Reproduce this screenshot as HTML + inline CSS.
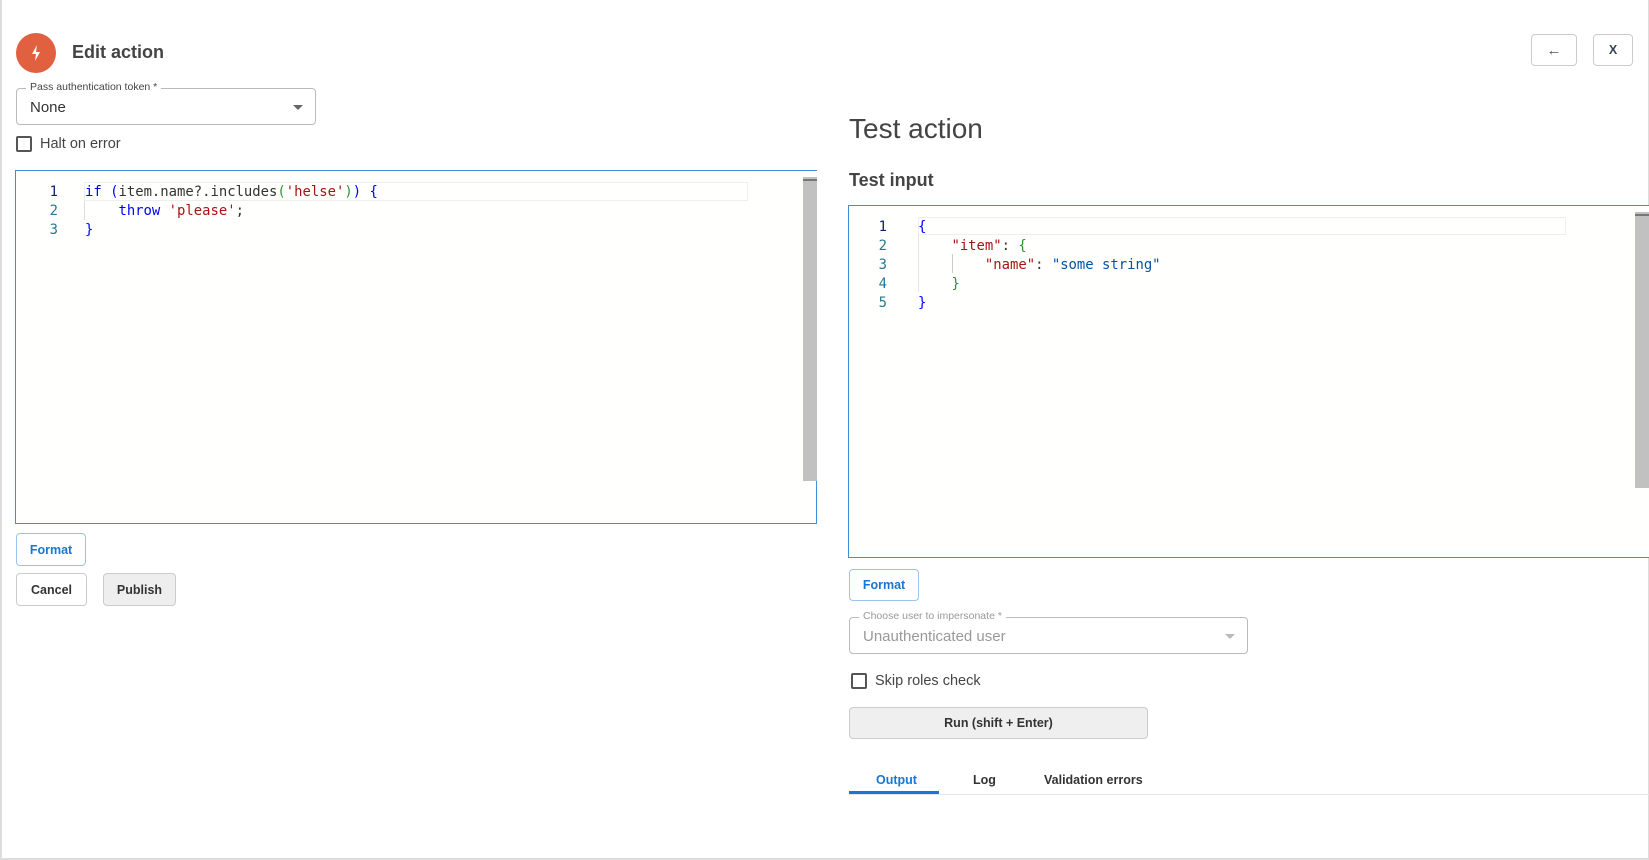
<!DOCTYPE html>
<html><head><meta charset="utf-8"><style>
*{box-sizing:border-box;margin:0;padding:0}
body{width:1649px;height:860px;background:#fff;font-family:"Liberation Sans",sans-serif;position:relative;overflow:hidden;color:#333}
.frame{position:absolute;left:0;top:0;width:1649px;height:860px;border-left:2px solid #ddd;border-bottom:2px solid #ddd;border-right:1px solid #ddd}
.a{position:absolute}
.btn{position:absolute;border:1px solid #ccc;border-radius:4px;background:#fff;font-size:12.5px;font-weight:bold;display:flex;align-items:center;justify-content:center;color:#333}
.sel{position:absolute;border:1px solid #bbb;border-radius:4px}
.lbl{position:absolute;top:-8px;left:9px;background:#fff;padding:0 4px;font-size:10.5px;color:#444}
.cb{position:absolute;width:16px;height:16px;border:2px solid #555;border-radius:2px}
.ed{position:absolute;border:1px solid #3b8fdc;background:#fffffd;font-family:"DejaVu Sans Mono",monospace;font-size:13.9px}
.ln{position:absolute;color:#237893;width:20px;text-align:right}
.code{position:absolute;white-space:pre}
.kw{color:#0000ff}.st{color:#a31515}.sv{color:#0451a5}.g{color:#319331}
</style></head><body>
<div class="frame"></div>
<div class="a" style="left:16px;top:33px;width:40px;height:40px;border-radius:50%;background:#e1603f"></div>
<svg class="a" style="left:30px;top:44px" width="12" height="18" viewBox="0 0 12 18"><path d="M7 1 L2 10 H6 L5 17 L10 8 H6 Z" fill="#fff"/></svg>
<div class="a" style="left:72px;top:42px;font-size:18px;font-weight:bold;color:#444">Edit action</div>
<div class="sel" style="left:16px;top:88px;width:300px;height:37px"><div class="lbl">Pass authentication token *</div>
<div class="a" style="left:13px;top:10px;font-size:15px;color:#333">None</div>
<div class="a" style="right:12px;top:16px;border-left:5px solid transparent;border-right:5px solid transparent;border-top:5px solid #666"></div></div>
<div class="cb" style="left:16px;top:136px"></div>
<div class="a" style="left:40px;top:136px;font-size:14.5px;color:#444">Halt on error</div>
<div class="ed" style="left:15px;top:170px;width:802px;height:354px">
<div class="a" style="left:68px;top:11px;width:664px;height:19px;border:1px solid #eee"></div>
<div class="a" style="left:68px;top:30px;width:1px;height:19px;background:#ddd"></div>
<div class="ln" style="left:22px;top:13px;color:#0b216f">1</div><div class="ln" style="left:22px;top:32px">2</div><div class="ln" style="left:22px;top:51px">3</div>
<div class="code" style="left:69px;top:13px"><span class="kw">if</span> <span class="kw">(</span>item.name?.includes<span class="g">(</span><span class="st">'helse'</span><span class="g">)</span><span class="kw">)</span> <span class="kw">{</span></div>
<div class="code" style="left:69px;top:32px">    <span class="kw">throw</span> <span class="st">'please'</span>;</div>
<div class="code" style="left:69px;top:51px"><span class="kw">}</span></div>
<div class="a" style="left:787px;top:0;width:14px;height:310px;background:#c1c1c1;border-top:6px solid #fff"></div>
<div class="a" style="left:787px;top:8px;width:14px;height:2px;background:#777"></div>
</div>
<div class="btn" style="left:16px;top:533px;width:70px;height:33px;color:#1976d2;border-color:#9cc3ec">Format</div>
<div class="btn" style="left:16px;top:573px;width:71px;height:33px">Cancel</div>
<div class="btn" style="left:103px;top:573px;width:73px;height:33px;background:#eee">Publish</div>

<div class="btn" style="left:1531px;top:34px;width:46px;height:32px;font-weight:normal;color:#555;font-size:15px">←</div>
<div class="btn" style="left:1593px;top:34px;width:40px;height:32px;color:#345">X</div>
<div class="a" style="left:849px;top:113px;font-size:28px;color:#444">Test action</div>
<div class="a" style="left:849px;top:170px;font-size:18px;font-weight:bold;color:#444">Test input</div>
<div class="ed" style="left:848px;top:205px;width:810px;height:353px">
<div class="a" style="left:69px;top:11px;width:648px;height:18px;border:1px solid #eee"></div>
<div class="a" style="left:69px;top:29px;width:1px;height:57px;background:#e5e5e5"></div>
<div class="a" style="left:103px;top:48px;width:1px;height:19px;background:#ccc"></div>
<div class="ln" style="left:18px;top:13px;color:#0b216f">1</div><div class="ln" style="left:18px;top:32px">2</div><div class="ln" style="left:18px;top:51px">3</div><div class="ln" style="left:18px;top:70px">4</div><div class="ln" style="left:18px;top:89px">5</div>
<div class="code" style="left:69px;top:13px"><span class="kw">{</span></div>
<div class="code" style="left:69px;top:32px">    <span class="st">"item"</span>: <span class="g">{</span></div>
<div class="code" style="left:69px;top:51px">        <span class="st">"name"</span>: <span class="sv">"some string"</span></div>
<div class="code" style="left:69px;top:70px">    <span class="g">}</span></div>
<div class="code" style="left:69px;top:89px"><span class="kw">}</span></div>
<div class="a" style="left:786px;top:0;width:14px;height:282px;background:#c1c1c1;border-top:6px solid #fff"></div>
<div class="a" style="left:786px;top:8px;width:14px;height:2px;background:#777"></div>
</div>
<div class="btn" style="left:849px;top:569px;width:70px;height:32px;color:#1976d2;border-color:#9cc3ec">Format</div>
<div class="sel" style="left:849px;top:617px;width:399px;height:37px"><div class="lbl" style="color:#999">Choose user to impersonate *</div>
<div class="a" style="left:13px;top:10px;font-size:15px;color:#999">Unauthenticated user</div>
<div class="a" style="right:12px;top:16px;border-left:5px solid transparent;border-right:5px solid transparent;border-top:5px solid #bbb"></div></div>
<div class="cb" style="left:851px;top:673px"></div>
<div class="a" style="left:875px;top:673px;font-size:14.5px;color:#444">Skip roles check</div>
<div class="btn" style="left:849px;top:707px;width:299px;height:32px;background:#efefef">Run (shift + Enter)</div>
<div class="a" style="left:849px;top:794px;width:800px;height:1px;background:#e6e6e6"></div>
<div class="a" style="left:849px;top:791px;width:90px;height:3px;background:#1976d2"></div>
<div class="a" style="left:876px;top:773px;font-size:12.5px;font-weight:bold;color:#1976d2">Output</div>
<div class="a" style="left:973px;top:773px;font-size:12.5px;font-weight:bold;color:#333">Log</div>
<div class="a" style="left:1044px;top:773px;font-size:12.5px;font-weight:bold;color:#333">Validation errors</div>
</body></html>
